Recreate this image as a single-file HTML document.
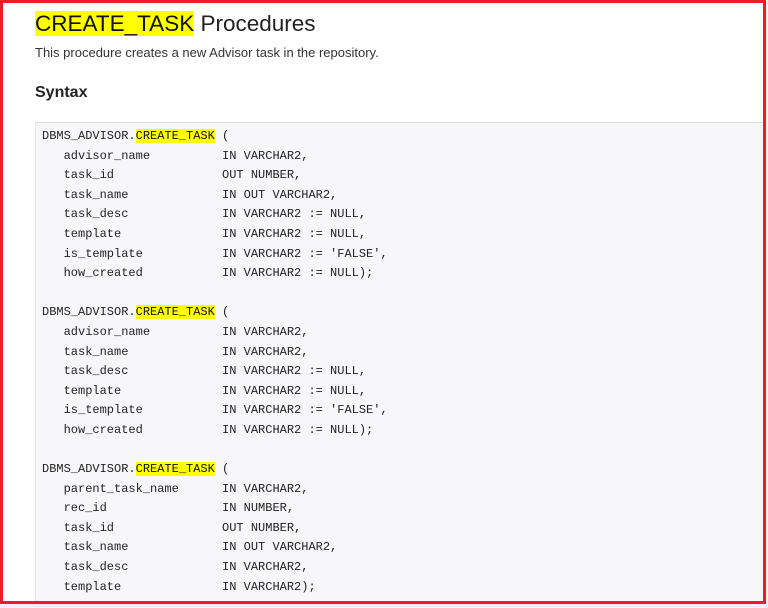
<!DOCTYPE html>
<html><head><style>
html,body{margin:0;padding:0;background:#fff;width:768px;height:608px;overflow:hidden;}
.outer{position:absolute;left:0;top:0;width:768px;height:608px;background:#f4f4f4;}
.frame{position:absolute;left:0;top:0;width:760px;height:598px;border:3px solid #ee1c25;overflow:hidden;background:#fff;}
h1{position:absolute;left:32px;top:6px;margin:0;font:400 22.5px "Liberation Sans",sans-serif;color:#222;line-height:29px;}
mark{background:#ffff00;color:#111;}
p{position:absolute;left:32px;top:42px;margin:0;font:13px "Liberation Sans",sans-serif;color:#333;}
h2{position:absolute;left:32px;top:81px;margin:0;font:700 16px "Liberation Sans",sans-serif;color:#222;}
pre{position:absolute;left:32px;top:119px;width:740px;height:480px;margin:0;background:#f7f7f9;border-top:1px solid #dcdce0;border-left:1px solid #e6e6ea;padding:4px 0 0 6px;box-sizing:border-box;font:12px "Liberation Mono",monospace;line-height:19.6px;color:#222;overflow:hidden;}
pre mark{background:#ffff00;}
</style></head><body>
<div class="outer"></div>
<div class="frame">
<h1><mark>CREATE_TASK</mark> Procedures</h1>
<p>This procedure creates a new Advisor task in the repository.</p>
<h2>Syntax</h2>
<pre>DBMS_ADVISOR.<mark>CREATE_TASK</mark> (
   advisor_name          IN VARCHAR2,
   task_id               OUT NUMBER,
   task_name             IN OUT VARCHAR2,
   task_desc             IN VARCHAR2 := NULL,
   template              IN VARCHAR2 := NULL,
   is_template           IN VARCHAR2 := 'FALSE',
   how_created           IN VARCHAR2 := NULL);

DBMS_ADVISOR.<mark>CREATE_TASK</mark> (
   advisor_name          IN VARCHAR2,
   task_name             IN VARCHAR2,
   task_desc             IN VARCHAR2 := NULL,
   template              IN VARCHAR2 := NULL,
   is_template           IN VARCHAR2 := 'FALSE',
   how_created           IN VARCHAR2 := NULL);

DBMS_ADVISOR.<mark>CREATE_TASK</mark> (
   parent_task_name      IN VARCHAR2,
   rec_id                IN NUMBER,
   task_id               OUT NUMBER,
   task_name             IN OUT VARCHAR2,
   task_desc             IN VARCHAR2,
   template              IN VARCHAR2);</pre>
</div>
</body></html>
